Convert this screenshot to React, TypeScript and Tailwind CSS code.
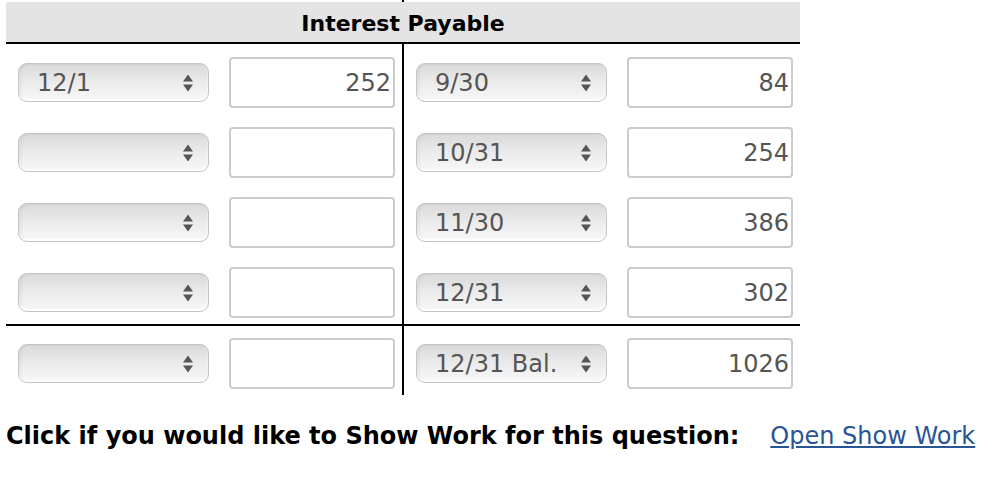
import React from "react";

const font = { fontFamily: '"DejaVu Sans", Verdana, sans-serif' };

function Sel({ label }: { label: string }) {
  return (
    <div className="relative flex h-[39px] w-[191px] items-center rounded-[9px] border border-[#c4c4c4] bg-gradient-to-b from-[#dadada] via-[#ebebeb] to-[#f8f8f8] pl-[18px] shadow-[inset_0_-2px_2px_#ffffff,inset_2px_0_3px_rgba(0,0,0,0.07)]">
      <span className="pt-[1px] text-[24px] leading-none text-[#555555]">{label}</span>
      <svg
        className="absolute right-[15px] top-1/2 -translate-y-1/2"
        width="10"
        height="17"
        viewBox="0 0 10 17"
      >
        <polygon points="5,0 10,7 0,7" fill="#555555" />
        <polygon points="0,10 10,10 5,17" fill="#555555" />
      </svg>
    </div>
  );
}

function Inp({ value }: { value: string }) {
  return (
    <div className="flex h-[51px] w-[166px] items-center justify-end rounded-[4px] border-2 border-[#cccccc] bg-white pr-[2px]">
      <span className="text-[24px] leading-none text-[#555555]">{value}</span>
    </div>
  );
}

function Cell({ label, value }: { label: string; value: string }) {
  return (
    <div className="flex items-center gap-[20px] pl-[12px]">
      <Sel label={label} />
      <Inp value={value} />
    </div>
  );
}

export default function App() {
  const upper = [
    ["12/1", "252", "9/30", "84"],
    ["", "", "10/31", "254"],
    ["", "", "11/30", "386"],
    ["", "", "12/31", "302"],
  ];
  return (
    <div className="h-[496px] w-[1008px] bg-white" style={font}>
      <div className="ml-[6px] w-[794px]">
        <div className="grid h-[2px] grid-cols-[396px_2px_396px]">
          <div />
          <div className="bg-black" />
          <div />
        </div>
        <div className="flex h-[42px] items-center justify-center border-b-2 border-black bg-[#e4e4e4] pt-[3px]">
          <span className="text-[22px] font-bold leading-none text-black">Interest Payable</span>
        </div>
        <div className="grid grid-cols-[396px_2px_396px]">
          <div className="flex flex-col gap-[19px] pb-[6px] pt-[13px]">
            {upper.map((r, i) => (
              <Cell key={i} label={r[0]} value={r[1]} />
            ))}
          </div>
          <div className="bg-black" />
          <div className="flex flex-col gap-[19px] pb-[6px] pt-[13px]">
            {upper.map((r, i) => (
              <Cell key={i} label={r[2]} value={r[3]} />
            ))}
          </div>
        </div>
        <div className="h-[2px] bg-black" />
        <div className="grid grid-cols-[396px_2px_396px]">
          <div className="pb-[6px] pt-[12px]">
            <Cell label="" value="" />
          </div>
          <div className="bg-black" />
          <div className="pb-[6px] pt-[12px]">
            <Cell label="12/31 Bal." value="1026" />
          </div>
        </div>
      </div>
      <div className="ml-[6px] mt-[29px] flex items-center text-[24px] leading-none">
        <span className="font-bold text-black">Click if you would like to Show Work for this question:</span>
        <a href="#" className="ml-[31px] text-[#2a5595] underline">
          Open Show Work
        </a>
      </div>
    </div>
  );
}
